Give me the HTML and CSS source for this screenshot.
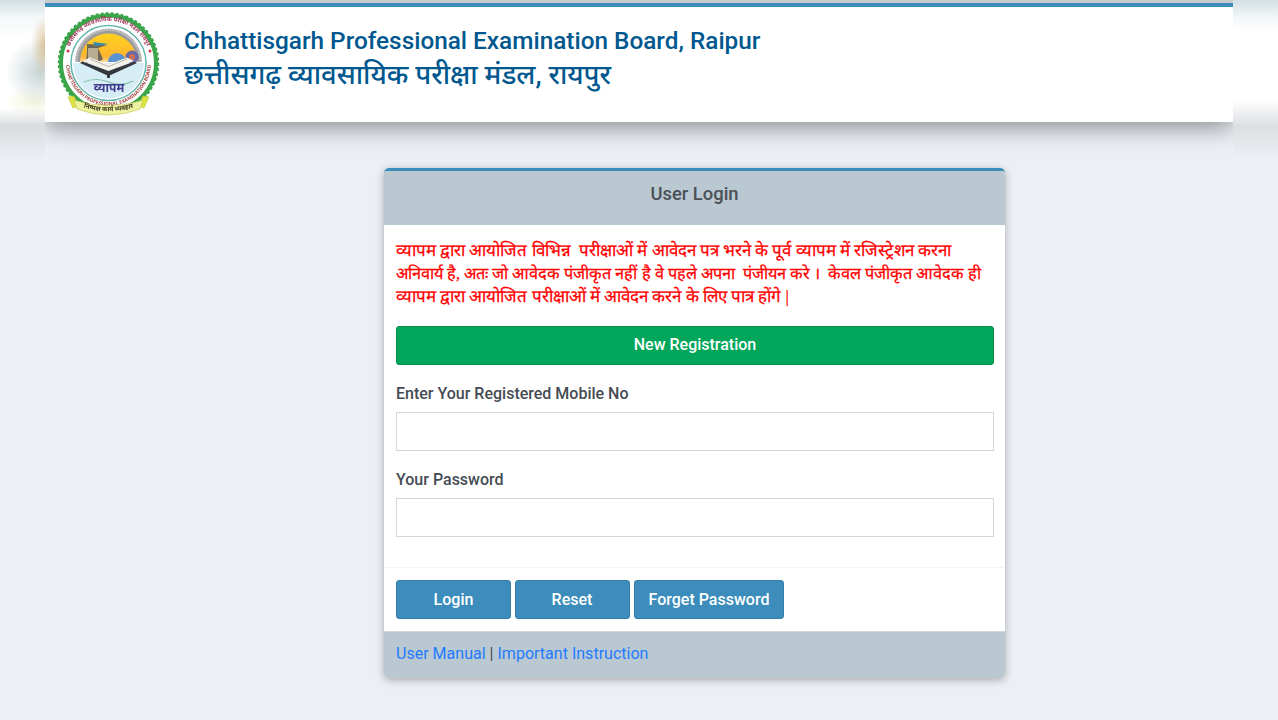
FILE: index.html
```html
<!DOCTYPE html>
<html>

<head>
    <title>User Login</title>
    <link rel="stylesheet" href="styles.css">
</head>

<body>
    <div class="side side-left"></div>
    <div class="side side-right"></div>
    <header class="banner">
        <svg class="logo" viewBox="0 0 104 106" width="104" height="106">
            <defs>
                <path id="ringTop" d="M9.500 52a42 42 0 0 1 84 0"/>
                <path id="ringBottom" d="M9 52a42.500 42.500 0 0 0 85 0"/>
                <path id="ribbonCurve" d="M21 94.500Q51.500 106 82 94.500"/>
                <linearGradient id="sky" x1="0" y1="0" x2="0" y2="1">
                    <stop offset="0" stop-color="#ffd21f"/>
                    <stop offset="0.8" stop-color="#ffb52e"/>
                    <stop offset="1" stop-color="#f9d9a0"/>
                </linearGradient>
            </defs>
            <circle cx="51.500" cy="52" r="47.500" fill="#fff" stroke="#3aa54a" stroke-width="4"/>
            <circle cx="51.500" cy="52" r="49.500" fill="none" stroke="#3aa54a" stroke-width="2.500" stroke-dasharray="3 2"/>
            <text class="ring-text ring-hindi"><textPath href="#ringTop" startOffset="50%">छत्तीसगढ़ व्यावसायिक परीक्षा मंडल रायपुर</textPath></text>
            <text class="ring-text ring-english"><textPath href="#ringBottom" startOffset="50%">CHHATTISGARH PROFESSIONAL EXAMINATION BOARD</textPath></text>
            <circle cx="11" cy="40" r="1.500" fill="#d8344a"/>
            <circle cx="93" cy="40" r="1.500" fill="#d8344a"/>
            <circle cx="51.500" cy="52" r="37.500" fill="#fff" stroke="#63b6ab" stroke-width="1.500"/>
            <path d="M16 52a35.500 35.500 0 0 0 71 0z" fill="#d6edf6"/>
            <path d="M18 51a33.500 33.500 0 0 1 67 0z" fill="#9b9b9b"/>
            <path d="M18 51a33.500 33.500 0 0 1 67 0" fill="none" stroke="#fff" stroke-width="5" stroke-dasharray="0.800 0.800" opacity="0.6"/>
            <path d="M23 51a28.500 28.500 0 0 1 57 0z" fill="url(#sky)"/>
            <path d="M30 33l20 1-9 3 5 11-6 4H29l1-12z" fill="#6f6656"/>
            <path d="M31 37h10v13H31z" fill="#b8ad92"/>
            <path d="M36 31l16 2-14 2z" fill="#2f8db0"/>
            <path d="M51 51a9 9 0 0 1 18 0z" fill="#5a93cf"/>
            <circle cx="75" cy="46" r="6.500" fill="#6a68a8"/>
            <circle cx="75" cy="46" r="2.800" fill="#e8703a"/>
            <circle cx="75" cy="46" r="1" fill="#7a6fb0"/>
            <path d="M23 52l28.500 13L80 52l-2.500-1.500L51.500 60 25.500 50.500z" fill="#34383c"/>
            <path d="M26 50l25.500 9.500L77 50l-7-3.500-18.500 7-18.500-7z" fill="#f5f2e9"/>
            <path d="M33 48l18.500 7.500L70 48" fill="none" stroke="#a8a8a0" stroke-width="0.800"/>
            <circle cx="51.500" cy="65.500" r="1.500" fill="#1c1c1c"/>
            <path d="M27 71q12-5 24.500 0t25-1" fill="none" stroke="#83bfa2" stroke-width="1.200"/>
            <text x="52" y="81" class="logo-name">व्यापम</text>
            <path d="M11 86l6-1 5 10-6 2zM92 86l-6-1-5 10 6 2z" fill="#dfe33f" stroke="#aebd37" stroke-width="0.500"/>
            <path d="M17 89Q51.500 100 86 89l-3 9Q51.500 110 20 98z" fill="#eef1a0" stroke="#aebd37" stroke-width="0.500"/>
            <text class="ribbon-text"><textPath href="#ribbonCurve" startOffset="50%">निष्पक्ष कार्य व्यवहार</textPath></text>
        </svg>
        <div class="titles">
            <h1>Chhattisgarh Professional Examination Board, Raipur</h1>
            <h2>छत्तीसगढ़ व्यावसायिक परीक्षा मंडल, रायपुर</h2>
        </div>
    </header>

    <main class="card">
        <div class="card-head">User Login</div>
        <div class="card-body">
            <p class="notice">
                <span>व्यापम द्वारा आयोजित विभिन्न &nbsp;परीक्षाओं में आवेदन पत्र भरने के पूर्व व्यापम में रजिस्ट्रेशन करना</span>
                <span class="notice-tight">अनिवार्य है, अतः जो आवेदक पंजीकृत नहीं है वे पहले अपना &nbsp;पंजीयन करे ।&nbsp; केवल पंजीकृत आवेदक ही</span>
                <span>व्यापम द्वारा आयोजित परीक्षाओं में आवेदन करने के लिए पात्र होंगे |</span>
            </p>
            <a class="btn-register" href="#">New Registration</a>
            <label class="field">Enter Your Registered Mobile No
                <input type="text">
            </label>
            <label class="field">Your Password
                <input type="password">
            </label>
        </div>
        <div class="card-actions">
            <button class="btn btn-wide">Login</button>
            <button class="btn btn-wide">Reset</button>
            <button class="btn btn-forget">Forget Password</button>
        </div>
        <div class="card-foot">
            <a href="#">User Manual</a> | <a href="#">Important Instruction</a>
        </div>
    </main>
</body>

</html>
```
FILE: styles.css
```css
* {
    box-sizing: border-box;
}

html,
body {
    height: 100%;
}

body {
    margin: 0;
    background: #ecf0f5;
    color: #454b53;
    font-family: Roboto, "Noto Sans", sans-serif;
    font-size: 16px;
    overflow: hidden;
}

.side {
    position: absolute;
    top: 0;
    z-index: 1;
    width: 45px;
    height: 160px;
}

.side-left {
    left: 0;
    background:
        radial-gradient(ellipse 14px 30px at 45px 46px, rgba(206, 176, 122, 0.75), transparent),
        radial-gradient(ellipse 34px 34px at 40px 72px, rgba(170, 190, 190, 0.65), transparent),
        radial-gradient(ellipse 30px 14px at 34px 102px, rgba(234, 234, 190, 0.5), transparent),
        linear-gradient(#d3dfe4 0, #f5f8f9 18px, #fff 40px, #fff 108px, #d9dcdf 126px, #ecf0f5 160px);
}

.side-right {
    right: 0;
    background: linear-gradient(#d3dfe4 0, #f4f7f9 18px, #fff 32px, #fff 100px, #dcdfe2 126px, #ecf0f5 160px);
}

.banner {
    display: flex;
    align-items: flex-start;
    gap: 23px;
    position: relative;
    height: 119px;
    margin: 3px 45px 0;
    padding: 4px 0 0 12px;
    background: #fff;
    border-top: 4px solid #3c8dbc;
    box-shadow: 0 6px 22px rgba(0, 0, 0, 0.4);
}

.banner::before {
    content: "";
    position: absolute;
    top: -7px;
    left: 0;
    right: 0;
    height: 3px;
    background: #c9cccd;
}

.logo {
    flex: none;
    filter: blur(0.35px);
}

.logo-name {
    font-family: "Noto Sans", serif;
    font-size: 12px;
    font-weight: 700;
    font-style: italic;
    fill: #3f3a8f;
    text-anchor: middle;
}

.ring-text {
    font-family: "Noto Sans", sans-serif;
    font-weight: 700;
    text-anchor: middle;
}

.ring-hindi {
    font-size: 6px;
    fill: #a03a5a;
}

.ring-english {
    font-size: 4.800px;
    fill: #a8433f;
}

.ribbon-text {
    font-family: "Noto Sans", sans-serif;
    font-size: 6.500px;
    font-weight: 700;
    fill: #3c3c20;
    text-anchor: middle;
}

.titles {
    margin-top: 13px;
    color: #00588f;
}

.titles h1 {
    margin: 0;
    font-size: 24.350px;
    font-weight: 500;
    line-height: 34px;
}

.titles h2 {
    margin: 0;
    font-size: 27.450px;
    font-weight: 500;
    line-height: 34px;
}

.card {
    width: 621px;
    margin: 46px 0 0 384px;
    background: #fff;
    border-top: 3px solid #3c8dbc;
    border-radius: 5px;
    box-shadow: 0 2px 8px rgba(0, 0, 0, 0.3);
    overflow: hidden;
}

.card-head {
    height: 54px;
    padding-top: 11px;
    background: #bac8d1;
    text-align: center;
    font-size: 18.400px;
    font-weight: 500;
    line-height: 24px;
    color: #495057;
}

.card-body {
    padding: 14px 11px 0 12px;
}

.notice {
    margin: 0 0 18px;
    color: #f00;
    font-family: "Liberation Serif", serif;
    font-size: 16.900px;
    font-weight: 400;
    line-height: 23px;
    -webkit-text-stroke: 0.25px #f00;
}

.notice span {
    display: block;
    white-space: nowrap;
}

.notice .notice-tight {
    font-size: 16.300px;
}

.btn-register {
    display: block;
    height: 39px;
    background: #00a65a;
    border: 1px solid #008d4c;
    border-radius: 3px;
    color: #fff;
    text-align: center;
    text-decoration: none;
    font-weight: 500;
    line-height: 35px;
}

.field {
    display: block;
    margin-top: 17px;
    font-weight: 500;
    line-height: 24px;
}

.field input {
    display: block;
    width: 100%;
    height: 39px;
    margin-top: 6px;
    border: 1px solid #d2d6de;
    border-radius: 0;
    background: #fff;
}

.card-actions {
    display: flex;
    gap: 3.500px;
    margin-top: 30px;
    padding: 12px;
    border-top: 1px solid #f4f4f4;
}

.btn {
    height: 39px;
    background: #3c8dbc;
    border: 1px solid #367fa9;
    border-radius: 3px;
    color: #fff;
    font-family: inherit;
    font-size: 16px;
    font-weight: 500;
}

.btn-wide {
    width: 115px;
}

.btn-forget {
    width: 150px;
    margin-left: 1px;
}

.card-foot {
    height: 47px;
    padding: 10px 12px;
    background: #bac8d1;
    border-top: 1px solid #d2d6de;
    font-size: 16.050px;
    line-height: 24px;
}

.card-foot a {
    color: #1f7bff;
    text-decoration: none;
}
```
